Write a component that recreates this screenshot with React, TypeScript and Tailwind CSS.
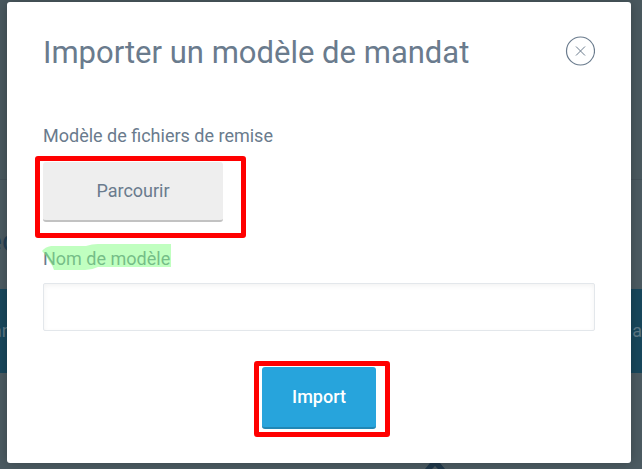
import React from "react";

function Backdrop() {
  return (
    <div aria-hidden="true" className="flex min-h-screen flex-col overflow-hidden bg-[#4c5b62]">
      <div className="h-[180px] border-b border-[#445259] bg-[#4a595f]" />
      <div className="flex h-[109px] items-center pt-3">
        <span className="-ml-3.5 text-3xl text-[#233f54]">ec</span>
      </div>
      <div className="flex h-[84px] items-center justify-between bg-[#18475c] text-lg text-[#5d7987]">
        <span className="-ml-2">an</span>
        <span>a</span>
      </div>
      <div className="flex flex-1 items-end justify-center pl-[228px]">
        <svg className="h-[7px] w-5" viewBox="0 0 20 7">
          <path d="M0 7 L5 1 Q10 -2 15 1 L20 7 H13 L10 4 L7 7Z" fill="#20384a" />
        </svg>
      </div>
    </div>
  );
}

function Highlight() {
  return (
    <svg
      aria-hidden="true"
      className="pointer-events-none absolute -left-px -top-0.5 h-[28px] w-[130px]"
      viewBox="0 0 130 28"
    >
      <path
        d="M0 8 Q3 4 9 3 L44 3 Q50 1 56 1 L129 1 V24 H56 Q50 27 43 27 L12 27 Q11 23 7 18 Q4 12 0 8Z"
        fill="#81ff81"
        fillOpacity="0.5"
      />
    </svg>
  );
}

export default function App() {
  return (
    <div className="relative min-h-screen font-['Roboto','Liberation_Sans',sans-serif] text-lg text-[#6a7b8d]">
      <Backdrop />
      <div className="absolute inset-0 pb-1.5 pl-[7px] pr-[11px] pt-0.5">
        <div
          role="dialog"
          aria-labelledby="title"
          className="flex h-full flex-col rounded-[3px] bg-white px-9 pt-[30px] shadow-[0_0_12px_rgba(0,0,0,0.25)]"
        >
          <header className="flex items-start justify-between">
            <h1 id="title" className="text-[31px] leading-[42px]">
              Importer un modèle de mandat
            </h1>
            <button type="button" aria-label="Fermer" className="mt-1">
              <svg className="size-[30px]" viewBox="0 0 30 30" fill="none" stroke="currentColor">
                <circle cx="15.5" cy="15" r="14" strokeWidth="1.2" />
                <path d="M11 10.5 20 19.5 M20 10.5 11 19.5" strokeWidth="1" />
              </svg>
            </button>
          </header>
          <form className="mt-12 flex flex-col items-start">
            <label htmlFor="browse" className="leading-7">
              Modèle de fichiers de remise
            </label>
            <div className="relative mt-3">
              <button
                id="browse"
                type="button"
                className="block h-[60px] w-[180px] rounded-[3px] border-b-2 border-[#c2c2c2] bg-[#eeeeee]"
              >
                Parcourir
              </button>
              <div className="pointer-events-none absolute -bottom-4 -left-2 -right-[23px] -top-1.5 rounded-[3px] border-[5px] border-[#ff0000]" />
            </div>
            <div className="relative mt-[23px]">
              <label htmlFor="name" className="block leading-7">
                Nom de modèle
              </label>
              <Highlight />
            </div>
            <input
              id="name"
              type="text"
              className="mt-2.5 h-12 w-full rounded-[2px] border border-[#e3e7eb] px-4 shadow-[inset_0_2px_5px_rgba(0,0,0,0.05)] outline-none"
            />
            <div className="relative mt-9 self-center">
              <button
                type="submit"
                className="block h-[62px] w-[114px] rounded-[3px] border-b-2 border-[#2187b5] bg-[#27a4dc] font-medium text-white"
              >
                Import
              </button>
              <div className="pointer-events-none absolute -bottom-2 -left-2 -right-3.5 -top-1.5 rounded-[3px] border-[5px] border-[#ff0000]" />
            </div>
          </form>
        </div>
      </div>
    </div>
  );
}
